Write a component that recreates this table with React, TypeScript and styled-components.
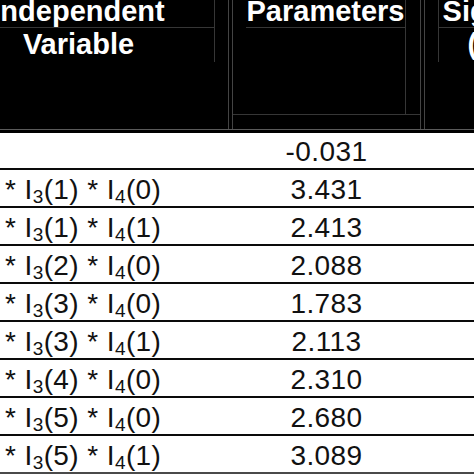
import styled, { createGlobalStyle } from "styled-components";

const GlobalStyle = createGlobalStyle`
  html, body {
    margin: 0;
    padding: 0;
    background: #fff;
  }
  body {
    font-family: "Liberation Sans", Arial, sans-serif;
  }
`;

type Row = { i3?: string; i4?: string; value: string };

const rows: Row[] = [
  { value: "-0.031" },
  { i3: "1", i4: "0", value: "3.431" },
  { i3: "1", i4: "1", value: "2.413" },
  { i3: "2", i4: "0", value: "2.088" },
  { i3: "3", i4: "0", value: "1.783" },
  { i3: "3", i4: "1", value: "2.113" },
  { i3: "4", i4: "0", value: "2.310" },
  { i3: "5", i4: "0", value: "2.680" },
  { i3: "5", i4: "1", value: "3.089" },
];

const App = () => {
  return (
    <>
      <GlobalStyle />
      <Frame>
        <Table>
          <HeadWrap>
            <HeadRow>
              <HeadCell $right>
                <HeadBox $side="right" $inset={13} $h={62} $padL={13}>
                  <HeadLine>Independent</HeadLine>
                  <HeadText>Variable</HeadText>
                </HeadBox>
              </HeadCell>
              <HeadCell $left $right>
                <HeadBox $h={115} $bottom>
                  <HeadBox $side="right" $inset={14} $h={114} $padL={13}>
                    <HeadLine>Parameters</HeadLine>
                  </HeadBox>
                </HeadBox>
              </HeadCell>
              <HeadCell $left>
                <HeadBox $side="left" $inset={13} $h={62} $padR={17}>
                  <HeadLine>Significance</HeadLine>
                  <HeadText>(p-value)</HeadText>
                </HeadBox>
              </HeadCell>
            </HeadRow>
          </HeadWrap>
          {rows.map((r, idx) => (
            <BodyRow key={idx} $first={idx === 0}>
              <TermCell $first={idx === 0}>
                {r.i3 && (
                  <>
                    * I<Sub>3</Sub>({r.i3}) * I<Sub>4</Sub>({r.i4})
                  </>
                )}
              </TermCell>
              <NumCell $first={idx === 0}>{r.value}</NumCell>
              <NumCell $first={idx === 0} />
            </BodyRow>
          ))}
        </Table>
      </Frame>
    </>
  );
};

const Frame = styled.div`
  width: 474px;
  height: 474px;
  overflow: hidden;
`;

const Table = styled.div`
  margin-left: -70px;
  width: max-content;
  border-bottom: 3px solid #4a4a4a;
`;

const HeadWrap = styled.div`
  background: #000;
  height: 133px;
  box-sizing: border-box;
  padding-bottom: 3px;
`;

const HeadRow = styled.div`
  display: grid;
  grid-template-columns: 299px 189px 210px;
  column-gap: 3px;
  height: 130px;
  box-sizing: border-box;
  border-bottom: 1px solid #5a5a5a;
`;

const HeadCell = styled.div<{ $left?: boolean; $right?: boolean }>`
  border-left: ${(p) => (p.$left ? "1px solid #444" : "none")};
  border-right: ${(p) => (p.$right ? "1px solid #444" : "none")};
  color: #fff;
  font-weight: bold;
  font-size: 29px;
  text-align: center;
  white-space: nowrap;
`;

const HeadBox = styled.div<{
  $side?: "left" | "right";
  $inset?: number;
  $h: number;
  $padL?: number;
  $padR?: number;
  $bottom?: boolean;
}>`
  height: ${(p) => p.$h}px;
  box-sizing: border-box;
  ${(p) =>
    p.$side
      ? `margin-${p.$side}: ${p.$inset ?? 0}px; border-${p.$side}: 1px solid #363636;`
      : ""}
  border-bottom: ${(p) => (p.$bottom ? "1px solid #363636" : "none")};
  padding-left: ${(p) => p.$padL ?? 0}px;
  padding-right: ${(p) => p.$padR ?? 0}px;
`;

const HeadLine = styled.div`
  height: 28px;
  box-sizing: border-box;
  border-bottom: 1px solid #363636;
  line-height: 22px;
`;

const HeadText = styled.div`
  padding-top: 5px;
  line-height: 22px;
`;

const BodyRow = styled.div<{ $first: boolean }>`
  display: grid;
  grid-template-columns: 299px 189px 210px;
  column-gap: 3px;
  height: ${(p) => (p.$first ? 35 : 38)}px;
  box-sizing: border-box;
  border-top: ${(p) => (p.$first ? "none" : "2px solid #0a0a0a")};
  font-size: 28px;
  line-height: 32px;
  letter-spacing: 0.4px;
  color: #111;
`;

const TermCell = styled.div<{ $first: boolean }>`
  padding-top: ${(p) => (p.$first ? 3 : 4)}px;
  padding-left: 75px;
  white-space: nowrap;
`;

const NumCell = styled.div<{ $first: boolean }>`
  padding-top: ${(p) => (p.$first ? 3 : 4)}px;
  text-align: center;
`;

const Sub = styled.sub`
  font-size: 19px;
  line-height: 0;
  vertical-align: -4px;
`;

export default App;
